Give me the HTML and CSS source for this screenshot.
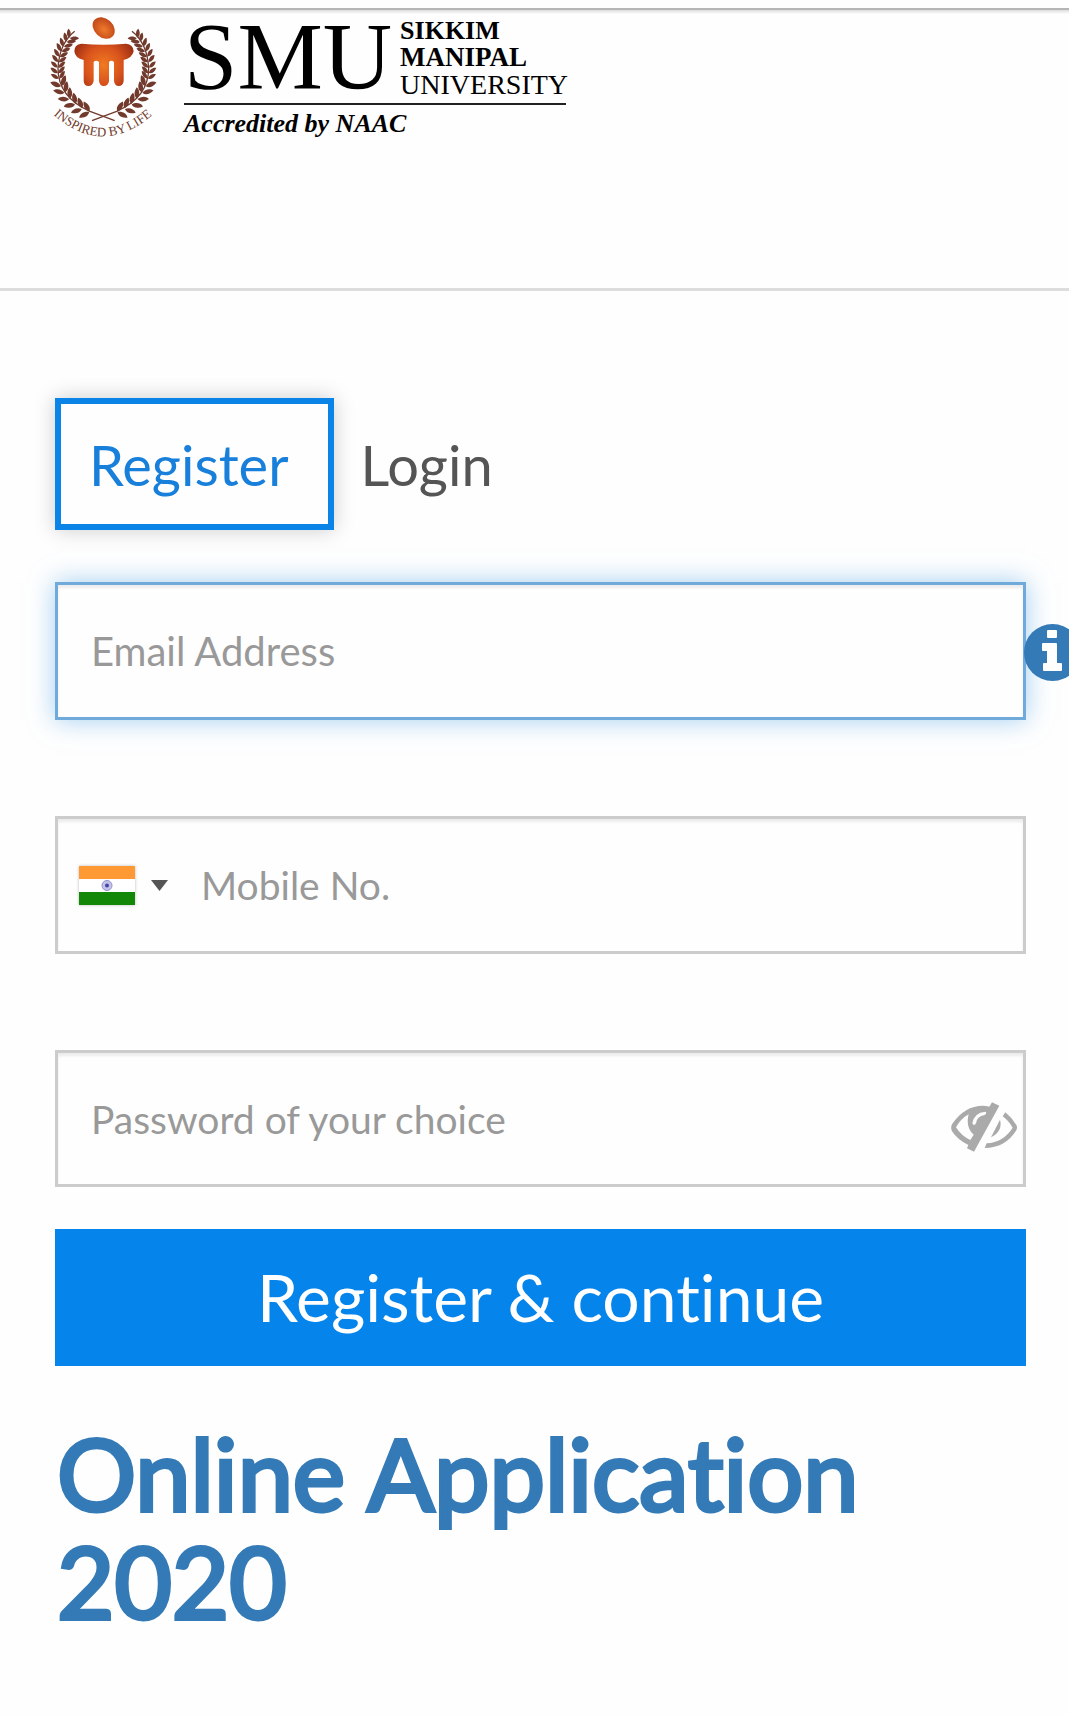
FILE: index.html
```html
<!DOCTYPE html>
<html lang="en">
<head>
<meta charset="utf-8">
<meta name="viewport" content="width=device-width, initial-scale=1">
<title>Sikkim Manipal University - Online Application</title>
<link rel="stylesheet" href="styles.css">
</head>
<body>
<header class="site-header">
  <a class="brand" href="#" aria-label="Sikkim Manipal University">
    <svg class="emblem" viewBox="0 0 390 420">
      <defs>
        <radialGradient id="head" cx="0.55" cy="0.55" r="0.6">
          <stop offset="0" stop-color="#ef7a2b"/><stop offset="1" stop-color="#bd4519"/>
        </radialGradient>
        <radialGradient id="torso" gradientUnits="userSpaceOnUse" cx="190" cy="165" r="100">
          <stop offset="0" stop-color="#f07a22"/><stop offset="0.55" stop-color="#d9531c"/><stop offset="1" stop-color="#9c2f14"/>
        </radialGradient>
        <path id="leaf" d="M0 0C11 5 15 17 9 33C-3 27-6 12 0 0Z"/>
        <g id="pair"><use href="#leaf" transform="translate(328 175) rotate(-32)"/><use href="#leaf" transform="translate(326 175) scale(-1 1) rotate(-28)"/></g>
        <g id="small"><use href="#leaf" transform="translate(327 175) rotate(-34) scale(.8)"/><use href="#leaf" transform="translate(325 175) scale(-.8 .8) rotate(-34)"/></g>
        <g id="branch">
          <path d="M224 332Q188 318 150 304Q54 262 54 175Q58 100 104 64" fill="none" stroke="#713a2c" stroke-width="4"/>
          <use href="#pair" transform="rotate(108 190 175)"/><use href="#pair" transform="rotate(118 190 175)"/>
          <use href="#pair" transform="rotate(128 190 175)"/><use href="#pair" transform="rotate(138 190 175)"/>
          <use href="#pair" transform="rotate(148 190 175)"/><use href="#pair" transform="rotate(157 190 175)"/>
          <use href="#small" transform="rotate(167 190 175)"/><use href="#small" transform="rotate(174 190 175)"/>
          <use href="#small" transform="rotate(181 190 175)"/><use href="#small" transform="rotate(188 190 175)"/>
          <use href="#small" transform="rotate(195 190 175)"/><use href="#small" transform="rotate(202 190 175)"/>
          <use href="#small" transform="rotate(209 190 175)"/><use href="#small" transform="rotate(216 190 175)"/>
          <use href="#small" transform="rotate(222 190 175)"/>
        </g>
        <path id="motto" d="M40 314Q190 446 344 310"/>
      </defs>
      <g fill="#713a2c">
        <use href="#branch"/>
        <use href="#branch" transform="translate(380 0) scale(-1 1)"/>
      </g>
      <ellipse cx="191" cy="54" rx="37" ry="28" transform="rotate(42 191 54)" fill="url(#head)"/>
      <path d="M124 101Q190 107 258 101Q281 104 281 124Q276 145 251 150V213Q249 228 236 228Q224 228 222 213V156Q214 148 207 156V213Q205 228 191 228Q179 228 177 213V156Q168 148 161 156V213Q158 228 145 228Q132 228 131 213V150Q105 145 103 124Q103 103 124 101Z" fill="url(#torso)"/>
      <text class="motto"><textPath href="#motto">INSPIRED BY LIFE</textPath></text>
    </svg>
    <span class="wordmark">
      <span class="wordmark-top">
        <span class="initials">SMU</span>
        <span class="full-name"><b class="sikkim">SIKKIM</b><b class="manipal">MANIPAL</b><span>UNIVERSITY</span></span>
      </span>
      <span class="accreditation">Accredited by NAAC</span>
    </span>
  </a>
</header>
<main class="content">
  <nav class="tabs">
    <button class="tab tab-active" type="button">Register</button>
    <button class="tab" type="button">Login</button>
  </nav>
  <form class="form">
    <div class="field field-focus">
      <input class="input input-email" type="email" placeholder="Email Address" aria-label="Email Address">
      <svg class="info" viewBox="0 0 57 57" role="img" aria-label="Information"><circle cx="28.500" cy="28.500" r="28.500" fill="#337ab7"/><path d="M24 6h8q1 0 1 1v6q0 1-1 1h-8q-1 0-1-1V7q0-1 1-1ZM19 19h13q1 0 1 1v19h4q1 0 1 1v6q0 1-1 1H20q-1 0-1-1v-6q0-1 1-1h3V27h-4q-1 0-1-1v-6q0-1 1-1Z" fill="#fff"/></svg>
    </div>
    <div class="field">
      <button class="country" type="button" aria-label="Country code: India">
        <svg class="flag" viewBox="0 0 56 39"><path d="M0 0h56v39H0z" fill="#fff"/><path d="M0 0h56v13H0z" fill="#ff9933"/><path d="M0 26h56v13H0z" fill="#138808"/><circle cx="28" cy="19.500" r="5" fill="#c3c3e8" stroke="#9090cf"/><circle cx="28" cy="19.500" r="2" fill="#4545a5"/></svg>
        <svg class="caret" viewBox="0 0 17 11"><path d="M0 0h17L8.500 11z" fill="#555"/></svg>
      </button>
      <input class="input" type="tel" placeholder="Mobile No." aria-label="Mobile No.">
    </div>
    <div class="field field-last">
      <input class="input" type="password" placeholder="Password of your choice" aria-label="Password of your choice">
      <button class="reveal" type="button" aria-label="Show password">
        <svg class="eye" viewBox="0 0 198 150"><path d="M123 1L145 11L69 149L48 139L52 129Q20 114 3 88Q-2 77 3 67Q44 7 105 12L115 14ZM53 37Q28 51 15 76Q30 101 58 114L68 98Q43 76 53 37ZM103 29Q69 32 64 64Q69 74 75 64Q77 43 101 39Q109 33 103 29Z" fill="#aaa" fill-rule="evenodd"/><path d="M163 31Q182 46 196 69Q200 76 196 85Q163 138 101 138L107 124Q157 121 185 77Q172 55 155 43Z" fill="#aaa"/><path d="M147 53Q156 87 120 106Z" fill="#aaa"/></svg>
      </button>
    </div>
    <button class="submit" type="submit">Register &amp; continue</button>
  </form>
  <h1 class="title">Online Application 2020</h1>
</main>
</body>
</html>
```
FILE: styles.css
```css
* {
  box-sizing: border-box;
}

body {
  margin: 0;
  background: #fefefe;
  font-family: Lato, sans-serif;
  font-variant-ligatures: none;
  color: #555;
  overflow-x: clip;
}

button,
input {
  margin: 0;
  padding: 0;
  border: 0;
  border-radius: 0;
  background: none;
  font: inherit;
  font-variant-ligatures: none;
  color: inherit;
}

.site-header {
  margin-top: 8px;
  height: 283px;
  border-top: 2px solid #b5b5b5;
  border-bottom: 3px solid #ddd;
  background: linear-gradient(#ddd, #fefefe 4px);
}

.brand {
  display: flex;
  padding-left: 40px;
  color: #000;
  text-decoration: none;
  font-family: "Liberation Serif", serif;
}

.emblem {
  width: 130px;
  height: 140px;
}

.motto {
  font-size: 39px;
  fill: #713a2c;
}

.wordmark {
  display: flex;
  flex-direction: column;
  align-items: flex-start;
  padding: 7px 0 0 14px;
}

.wordmark-top {
  display: flex;
  gap: 8px;
  width: 382px;
  height: 88px;
  border-bottom: 2px solid #222;
}

.initials {
  font-size: 96px;
  line-height: 80px;
}

.full-name {
  display: flex;
  flex-direction: column;
  font-size: 28px;
  line-height: 27px;
}

.sikkim {
  font-size: 26px;
}

.manipal {
  font-size: 27px;
}

.accreditation {
  font-size: 26px;
  font-weight: bold;
  font-style: italic;
  line-height: 38px;
}

.content {
  padding: 107px 43px 0 55px;
}

.tabs {
  display: flex;
  margin-bottom: 52px;
}

.tab {
  height: 132px;
  padding: 0 27px;
  font-size: 56px;
}

.tab-active {
  padding: 0 39px 0 28px;
  border: 6px solid #0b84e8;
  box-shadow: 0 0 20px rgba(0, 0, 0, 0.2);
  color: #187fda;
}

.field {
  position: relative;
  display: flex;
  height: 138px;
  margin-bottom: 96px;
  border: 3px solid #ccc;
  box-shadow: inset 0 3px 3px rgba(0, 0, 0, 0.075);
}

.field-focus {
  border-color: #70aadb;
  box-shadow: inset 0 3px 3px rgba(0, 0, 0, 0.075), 0 0 24px rgba(102, 175, 233, 0.6);
}

.field-last {
  height: 137px;
  margin-bottom: 42px;
}

.input {
  flex: 1;
  min-width: 0;
  padding: 0 33px;
  font-size: 39px;
  outline: none;
}

.input-email {
  font-size: 40px;
}

.input::placeholder {
  color: #999;
  opacity: 1;
}

.info {
  position: absolute;
  top: 39px;
  right: -58px;
  width: 57px;
  height: 57px;
}

.country {
  display: flex;
  align-items: center;
  gap: 16px;
  padding-left: 21px;
}

.flag {
  width: 56px;
  height: 39px;
  box-shadow: 0 0 3px #bbb;
}

.caret {
  width: 17px;
  height: 11px;
}

.reveal {
  position: absolute;
  right: 6px;
  top: 49px;
  width: 66px;
  height: 50px;
}

.eye {
  display: block;
  width: 66px;
  height: 50px;
}

.submit {
  display: block;
  width: 100%;
  height: 137px;
  padding-bottom: 2px;
  background: #0584ec;
  color: #fff;
  font-size: 66px;
}

.title {
  margin: 53px 0 0;
  padding-left: 2px;
  color: #337ab7;
  font-size: 99px;
  font-weight: 400;
  line-height: 108px;
  -webkit-text-stroke: 4px #337ab7;
}
```
